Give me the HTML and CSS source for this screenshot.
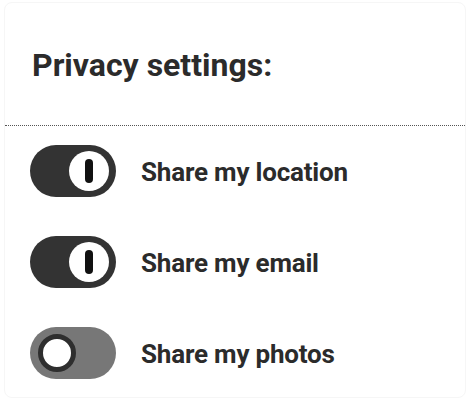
FILE: index.html
```html
<!DOCTYPE html>
<html lang="en">
<head>
<meta charset="utf-8">
<title>Privacy settings</title>
<link rel="stylesheet" href="styles.css">
</head>
<body>
<section class="card">
  <header class="card-head">
    <h2 class="title">Privacy settings:</h2>
  </header>
  <ul class="list">
    <li class="row">
      <span class="toggle on"><span class="knob"><span class="bar"></span></span></span>
      <span class="label">Share my location</span>
    </li>
    <li class="row">
      <span class="toggle on"><span class="knob"><span class="bar"></span></span></span>
      <span class="label">Share my email</span>
    </li>
    <li class="row">
      <span class="toggle off"><span class="knob"></span></span>
      <span class="label">Share my photos</span>
    </li>
  </ul>
</section>
</body>
</html>
```
FILE: styles.css
```css
html, body {
  margin: 0;
  padding: 0;
  background: #ffffff;
}
body {
  font-family: Roboto, "Liberation Sans", sans-serif;
  color: #2b2b2b;
}
.card {
  margin: 2px 8px 0 4px;
  height: 396px;
  box-sizing: border-box;
  border: 1px solid #f6f6f6;
  border-radius: 8px;
  background: #fff;
}
.card-head {
  height: 123px;
  box-sizing: border-box;
  padding: 43px 0 0 27px;
  border-bottom: 1px dotted #555;
}
.title {
  margin: 0;
  font-size: 32px;
  font-weight: 700;
  line-height: 38px;
  letter-spacing: 0;
}
.list {
  list-style: none;
  margin: 0;
  padding: 19px 0 0 25px;
  display: flex;
  flex-direction: column;
  gap: 39px;
}
.row {
  display: flex;
  align-items: center;
  gap: 25px;
  height: 52px;
}
.toggle {
  width: 86px;
  height: 52px;
  border-radius: 26px;
  display: flex;
  align-items: center;
  box-sizing: border-box;
  flex: none;
}
.toggle.on {
  background: #333333;
  justify-content: flex-end;
  padding-right: 7px;
}
.toggle.off {
  background: #777777;
  justify-content: flex-start;
  padding-left: 8px;
}
.knob {
  width: 40px;
  height: 40px;
  border-radius: 50%;
  background: #fff;
  display: flex;
  align-items: center;
  justify-content: center;
  box-sizing: border-box;
}
.toggle.off .knob {
  width: 38px;
  height: 38px;
  border: 5px solid #2e2e2e;
}
.bar {
  width: 8px;
  height: 24px;
  border-radius: 4px;
  background: #111;
}
.label {
  font-size: 26px;
  font-weight: 700;
  line-height: 30px;
  letter-spacing: -0.2px;
  padding-top: 2px;
}
```
